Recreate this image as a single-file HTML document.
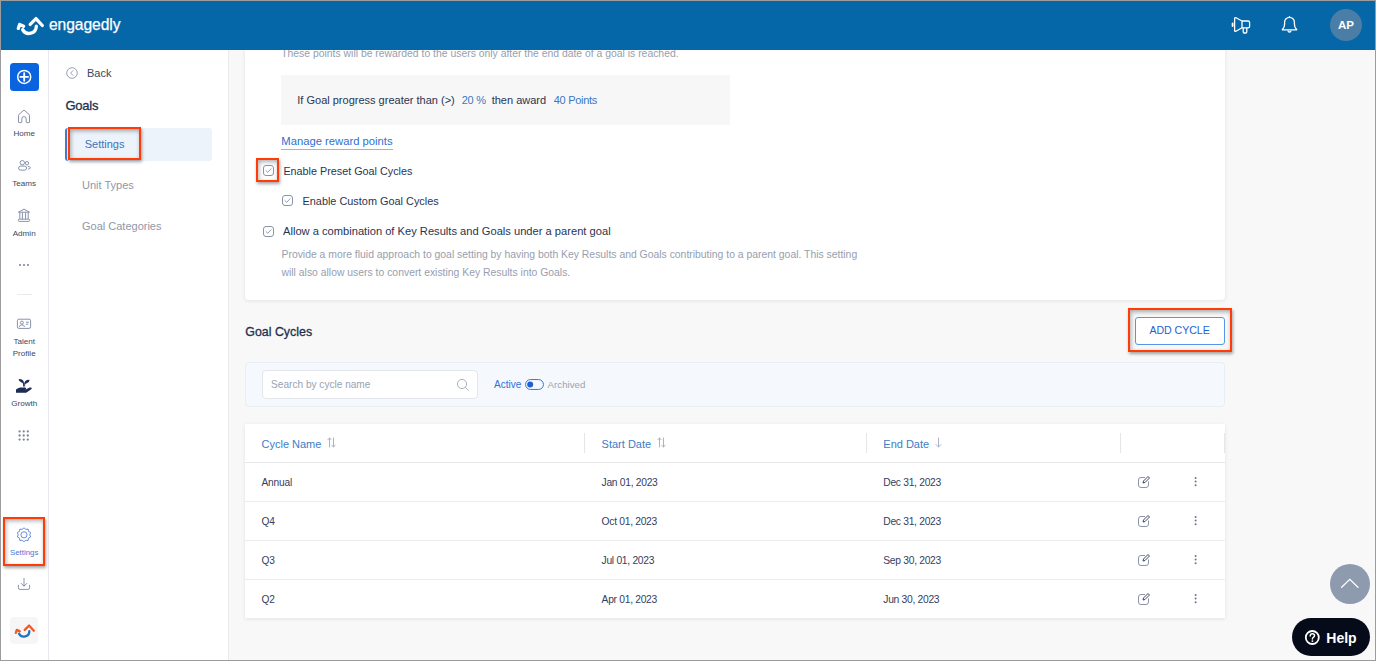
<!DOCTYPE html>
<html><head><meta charset="utf-8"><style>
html,body{margin:0;padding:0;width:1376px;height:661px;overflow:hidden;font-family:"Liberation Sans", sans-serif;}
#root{position:relative;width:1376px;height:661px;overflow:hidden;}
</style></head><body><div id="root">
<div style="position:absolute;left:0px;top:0px;width:1376px;height:661px;background:#f8f8f8"></div>
<div style="position:absolute;left:49px;top:50px;width:180px;height:611px;background:#fff;border-right:1px solid #e9ebef;box-sizing:border-box"></div>
<div style="position:absolute;left:0px;top:50px;width:49px;height:611px;background:#fff;border-right:1px solid #e6e9ef;box-sizing:border-box"></div>
<div style="position:absolute;left:245px;top:-10px;width:980px;height:310px;background:#fff;border-radius:4px;box-shadow:0 1px 4px rgba(0,0,0,0.09)"></div>
<div style="position:absolute;top:49.20px;font-size:10.4px;line-height:10.4px;color:#979eae;font-weight:normal;white-space:nowrap;left:281.2px;">These points will be rewarded to the users only after the end date of a goal is reached.</div>
<div style="position:absolute;left:281px;top:75px;width:449px;height:50px;background:#f7f7f7"></div>
<div style="position:absolute;top:94.69px;font-size:11px;line-height:11px;color:#2a3452;font-weight:normal;white-space:nowrap;left:297.3px;">If Goal progress greater than (&gt;)</div>
<div style="position:absolute;top:94.69px;font-size:11px;line-height:11px;color:#3b78c4;font-weight:normal;white-space:nowrap;letter-spacing:-0.3px;left:461.8px;">20 %</div>
<div style="position:absolute;top:94.69px;font-size:11px;line-height:11px;color:#2a3452;font-weight:normal;white-space:nowrap;left:491.7px;">then award</div>
<div style="position:absolute;top:94.69px;font-size:11px;line-height:11px;color:#3b78c4;font-weight:normal;white-space:nowrap;letter-spacing:-0.3px;left:553.8px;">40 Points</div>
<div style="position:absolute;top:136.28px;font-size:11.25px;line-height:11.25px;color:#2f6fd0;font-weight:normal;white-space:nowrap;left:281.3px;">Manage reward points</div>
<div style="position:absolute;left:281px;top:148.5px;width:112px;height:1.5px;background:#8cb8f0"></div>
<svg style="position:absolute;left:262.5px;top:165px" width="11" height="11" viewBox="0 0 11 11" fill="none"><rect x="0.5" y="0.5" width="10" height="10" rx="2.5" stroke="#8a93a8" stroke-width="1"/><path d="M3 5.6 L4.8 7.3 L8 3.8" stroke="#8a93a8" stroke-width="0.9" stroke-linecap="round" stroke-linejoin="round"/></svg>
<div style="position:absolute;top:165.56px;font-size:10.8px;line-height:10.8px;color:#2a3452;font-weight:normal;white-space:nowrap;left:283.4px;">Enable Preset Goal Cycles</div>
<svg style="position:absolute;left:282px;top:195px" width="11" height="11" viewBox="0 0 11 11" fill="none"><rect x="0.5" y="0.5" width="10" height="10" rx="2.5" stroke="#8a93a8" stroke-width="1"/><path d="M3 5.6 L4.8 7.3 L8 3.8" stroke="#8a93a8" stroke-width="0.9" stroke-linecap="round" stroke-linejoin="round"/></svg>
<div style="position:absolute;top:196.27px;font-size:10.9px;line-height:10.9px;color:#2a3452;font-weight:normal;white-space:nowrap;left:302.5px;">Enable Custom Goal Cycles</div>
<svg style="position:absolute;left:262.5px;top:225.5px" width="11" height="11" viewBox="0 0 11 11" fill="none"><rect x="0.5" y="0.5" width="10" height="10" rx="2.5" stroke="#8a93a8" stroke-width="1"/><path d="M3 5.6 L4.8 7.3 L8 3.8" stroke="#8a93a8" stroke-width="0.9" stroke-linecap="round" stroke-linejoin="round"/></svg>
<div style="position:absolute;top:226.36px;font-size:11.15px;line-height:11.15px;color:#2a3452;font-weight:normal;white-space:nowrap;left:283px;">Allow a combination of Key Results and Goals under a parent goal</div>
<div style="position:absolute;top:250.20px;font-size:10.4px;line-height:10.4px;color:#979eae;font-weight:normal;white-space:nowrap;left:281.5px;">Provide a more fluid approach to goal setting by having both Key Results and Goals contributing to a parent goal. This setting</div>
<div style="position:absolute;top:267.50px;font-size:10.4px;line-height:10.4px;color:#979eae;font-weight:normal;white-space:nowrap;left:281.5px;">will also allow users to convert existing Key Results into Goals.</div>
<div style="position:absolute;left:0px;top:0px;width:1376px;height:50px;background:#0567a8"></div>
<div style="position:absolute;top:325.70px;font-size:12.4px;line-height:12.4px;color:#22304f;font-weight:normal;white-space:nowrap;left:245.3px;-webkit-text-stroke:0.3px #22304f;">Goal Cycles</div>
<div style="position:absolute;left:1135px;top:317px;width:90px;height:28px;background:#fff;border:1px solid #5596e8;border-radius:3px;box-sizing:border-box"></div>
<div style="position:absolute;top:325.03px;font-size:10.6px;line-height:10.6px;color:#1d5fd3;font-weight:normal;white-space:nowrap;letter-spacing:-0.05px;left:1149.5px;">ADD CYCLE</div>
<div style="position:absolute;left:245px;top:362px;width:980px;height:45px;background:#f5f9fd;border:1px solid #e9eef4;border-radius:4px;box-sizing:border-box"></div>
<div style="position:absolute;left:262px;top:370px;width:216px;height:29px;background:#fff;border:1px solid #e3e6ec;border-radius:4px;box-sizing:border-box"></div>
<div style="position:absolute;top:379.95px;font-size:10.1px;line-height:10.1px;color:#9aa2b3;font-weight:normal;white-space:nowrap;left:271.1px;">Search by cycle name</div>
<svg style="position:absolute;left:456px;top:378px" width="14" height="14" viewBox="0 0 14 14" fill="none"><circle cx="6" cy="6" r="4.6" stroke="#aab1bf" stroke-width="1"/><path d="M9.4 9.4 L12.5 12.5" stroke="#aab1bf" stroke-width="1" stroke-linecap="round"/></svg>
<div style="position:absolute;top:380.13px;font-size:10px;line-height:10px;color:#2f6fe0;font-weight:normal;white-space:nowrap;left:494px;">Active</div>
<svg style="position:absolute;left:525px;top:379.3px" width="19" height="11" viewBox="0 0 19 11" fill="none"><rect x="0.55" y="0.55" width="17.9" height="9.9" rx="4.95" stroke="#3575e2" stroke-width="1"/><circle cx="5.2" cy="5.5" r="3.0" fill="#1f5fd6"/></svg>
<div style="position:absolute;top:380.39px;font-size:9.7px;line-height:9.7px;color:#9aa2b3;font-weight:normal;white-space:nowrap;left:547.6px;">Archived</div>
<div style="position:absolute;left:245px;top:424px;width:980px;height:194px;background:#fff;box-shadow:0 1px 4px rgba(0,0,0,0.09)"></div>
<div style="position:absolute;left:245px;top:462px;width:980px;height:1px;background:#e6e8ec"></div>
<div style="position:absolute;left:245px;top:501px;width:980px;height:1px;background:#ececef"></div>
<div style="position:absolute;left:245px;top:540px;width:980px;height:1px;background:#ececef"></div>
<div style="position:absolute;left:245px;top:579px;width:980px;height:1px;background:#ececef"></div>
<div style="position:absolute;left:584px;top:433px;width:1px;height:20px;background:#e4e6ea"></div>
<div style="position:absolute;left:866px;top:433px;width:1px;height:20px;background:#e4e6ea"></div>
<div style="position:absolute;left:1120px;top:433px;width:1px;height:20px;background:#e4e6ea"></div>
<div style="position:absolute;left:1224px;top:433px;width:1px;height:20px;background:#e4e6ea"></div>
<div style="position:absolute;top:438.69px;font-size:11px;line-height:11px;color:#3d7cc6;font-weight:normal;white-space:nowrap;left:261.5px;">Cycle Name</div>
<div style="position:absolute;top:438.69px;font-size:11px;line-height:11px;color:#3d7cc6;font-weight:normal;white-space:nowrap;left:601.6px;">Start Date</div>
<div style="position:absolute;top:438.69px;font-size:11px;line-height:11px;color:#3d7cc6;font-weight:normal;white-space:nowrap;left:883.3px;">End Date</div>
<svg style="position:absolute;left:327px;top:436.5px" width="9" height="11" viewBox="0 0 9 11" fill="none"><path d="M2.5 10 V1 M0.8 2.8 L2.5 1 L4.2 2.8" stroke="#a3acbd" stroke-width="0.9" stroke-linecap="round" stroke-linejoin="round"/><path d="M6.5 1 V10 M4.8 8.2 L6.5 10 L8.2 8.2" stroke="#a3acbd" stroke-width="0.9" stroke-linecap="round" stroke-linejoin="round"/></svg>
<svg style="position:absolute;left:657px;top:436.5px" width="9" height="11" viewBox="0 0 9 11" fill="none"><path d="M2.5 10 V1 M0.8 2.8 L2.5 1 L4.2 2.8" stroke="#a3acbd" stroke-width="0.9" stroke-linecap="round" stroke-linejoin="round"/><path d="M6.5 1 V10 M4.8 8.2 L6.5 10 L8.2 8.2" stroke="#a3acbd" stroke-width="0.9" stroke-linecap="round" stroke-linejoin="round"/></svg>
<svg style="position:absolute;left:934px;top:436.5px" width="9" height="11" viewBox="0 0 9 11" fill="none"><path d="M4.5 1 V10 M2 7.5 L4.5 10 L7 7.5" stroke="#a3acbd" stroke-width="0.9" stroke-linecap="round" stroke-linejoin="round"/></svg>
<div style="position:absolute;top:477.67px;font-size:10.2px;line-height:10.2px;color:#36405e;font-weight:normal;white-space:nowrap;letter-spacing:-0.2px;left:261.5px;">Annual</div>
<div style="position:absolute;top:477.58px;font-size:10.3px;line-height:10.3px;color:#36405e;font-weight:normal;white-space:nowrap;letter-spacing:-0.3px;left:601.6px;">Jan 01, 2023</div>
<div style="position:absolute;top:477.58px;font-size:10.3px;line-height:10.3px;color:#36405e;font-weight:normal;white-space:nowrap;letter-spacing:-0.3px;left:883.3px;">Dec 31, 2023</div>
<svg style="position:absolute;left:1137px;top:475px" width="14" height="14" viewBox="0 0 14 14" fill="none"><path d="M8 2.5 H4 A2.5 2.5 0 0 0 1.5 5 V10 A2.5 2.5 0 0 0 4 12.5 H9 A2.5 2.5 0 0 0 11.5 10 V6.5" stroke="#8a94aa" stroke-width="1"/><path d="M6 8 L6.5 6 L11 1.5 L12.5 3 L8 7.5 Z" stroke="#2a3452" stroke-width="0.9" stroke-linejoin="round"/></svg>
<svg style="position:absolute;left:1193px;top:476px" width="5" height="12" viewBox="0 0 5 12" fill="none"><circle cx="2.6" cy="2.0" r="1.0" fill="#6b7590"/><circle cx="2.6" cy="5.6" r="1.0" fill="#6b7590"/><circle cx="2.6" cy="9.2" r="1.0" fill="#6b7590"/></svg>
<div style="position:absolute;top:516.67px;font-size:10.2px;line-height:10.2px;color:#36405e;font-weight:normal;white-space:nowrap;letter-spacing:-0.2px;left:261.5px;">Q4</div>
<div style="position:absolute;top:516.58px;font-size:10.3px;line-height:10.3px;color:#36405e;font-weight:normal;white-space:nowrap;letter-spacing:-0.3px;left:601.6px;">Oct 01, 2023</div>
<div style="position:absolute;top:516.58px;font-size:10.3px;line-height:10.3px;color:#36405e;font-weight:normal;white-space:nowrap;letter-spacing:-0.3px;left:883.3px;">Dec 31, 2023</div>
<svg style="position:absolute;left:1137px;top:514px" width="14" height="14" viewBox="0 0 14 14" fill="none"><path d="M8 2.5 H4 A2.5 2.5 0 0 0 1.5 5 V10 A2.5 2.5 0 0 0 4 12.5 H9 A2.5 2.5 0 0 0 11.5 10 V6.5" stroke="#8a94aa" stroke-width="1"/><path d="M6 8 L6.5 6 L11 1.5 L12.5 3 L8 7.5 Z" stroke="#2a3452" stroke-width="0.9" stroke-linejoin="round"/></svg>
<svg style="position:absolute;left:1193px;top:515px" width="5" height="12" viewBox="0 0 5 12" fill="none"><circle cx="2.6" cy="2.0" r="1.0" fill="#6b7590"/><circle cx="2.6" cy="5.6" r="1.0" fill="#6b7590"/><circle cx="2.6" cy="9.2" r="1.0" fill="#6b7590"/></svg>
<div style="position:absolute;top:555.67px;font-size:10.2px;line-height:10.2px;color:#36405e;font-weight:normal;white-space:nowrap;letter-spacing:-0.2px;left:261.5px;">Q3</div>
<div style="position:absolute;top:555.58px;font-size:10.3px;line-height:10.3px;color:#36405e;font-weight:normal;white-space:nowrap;letter-spacing:-0.3px;left:601.6px;">Jul 01, 2023</div>
<div style="position:absolute;top:555.58px;font-size:10.3px;line-height:10.3px;color:#36405e;font-weight:normal;white-space:nowrap;letter-spacing:-0.3px;left:883.3px;">Sep 30, 2023</div>
<svg style="position:absolute;left:1137px;top:553px" width="14" height="14" viewBox="0 0 14 14" fill="none"><path d="M8 2.5 H4 A2.5 2.5 0 0 0 1.5 5 V10 A2.5 2.5 0 0 0 4 12.5 H9 A2.5 2.5 0 0 0 11.5 10 V6.5" stroke="#8a94aa" stroke-width="1"/><path d="M6 8 L6.5 6 L11 1.5 L12.5 3 L8 7.5 Z" stroke="#2a3452" stroke-width="0.9" stroke-linejoin="round"/></svg>
<svg style="position:absolute;left:1193px;top:554px" width="5" height="12" viewBox="0 0 5 12" fill="none"><circle cx="2.6" cy="2.0" r="1.0" fill="#6b7590"/><circle cx="2.6" cy="5.6" r="1.0" fill="#6b7590"/><circle cx="2.6" cy="9.2" r="1.0" fill="#6b7590"/></svg>
<div style="position:absolute;top:594.67px;font-size:10.2px;line-height:10.2px;color:#36405e;font-weight:normal;white-space:nowrap;letter-spacing:-0.2px;left:261.5px;">Q2</div>
<div style="position:absolute;top:594.58px;font-size:10.3px;line-height:10.3px;color:#36405e;font-weight:normal;white-space:nowrap;letter-spacing:-0.3px;left:601.6px;">Apr 01, 2023</div>
<div style="position:absolute;top:594.58px;font-size:10.3px;line-height:10.3px;color:#36405e;font-weight:normal;white-space:nowrap;letter-spacing:-0.3px;left:883.3px;">Jun 30, 2023</div>
<svg style="position:absolute;left:1137px;top:592px" width="14" height="14" viewBox="0 0 14 14" fill="none"><path d="M8 2.5 H4 A2.5 2.5 0 0 0 1.5 5 V10 A2.5 2.5 0 0 0 4 12.5 H9 A2.5 2.5 0 0 0 11.5 10 V6.5" stroke="#8a94aa" stroke-width="1"/><path d="M6 8 L6.5 6 L11 1.5 L12.5 3 L8 7.5 Z" stroke="#2a3452" stroke-width="0.9" stroke-linejoin="round"/></svg>
<svg style="position:absolute;left:1193px;top:593px" width="5" height="12" viewBox="0 0 5 12" fill="none"><circle cx="2.6" cy="2.0" r="1.0" fill="#6b7590"/><circle cx="2.6" cy="5.6" r="1.0" fill="#6b7590"/><circle cx="2.6" cy="9.2" r="1.0" fill="#6b7590"/></svg>
<svg style="position:absolute;left:0px;top:0px" width="1376" height="661" viewBox="0 0 1376 661" fill="none"><g transform="translate(14,12) scale(1)" stroke-linecap="round" stroke-linejoin="round" fill="none"><path d="M4.3 16.4 L5.6 12.4 L9.6 14.3" stroke="#fff" stroke-width="3.3"/><path d="M8.6 17.6 A7.3 7.3 0 0 0 22.3 14.2" stroke="#fff" stroke-width="3.3"/><path d="M16.2 12.4 L22 6.6 L28.3 13.5" stroke="#fff" stroke-width="3.3"/></g></svg>
<div style="position:absolute;top:16.99px;font-size:15.6px;line-height:15.6px;color:#fff;font-weight:normal;white-space:nowrap;letter-spacing:-0.05px;left:49px;-webkit-text-stroke:0.25px #fff;">engagedly</div>
<svg style="position:absolute;left:1231px;top:15px" width="20" height="20" viewBox="0 0 20 20" fill="none"><g stroke="#fff" stroke-width="1.3" stroke-linejoin="round" fill="none"><path d="M1.6 8.5 V11" stroke-linecap="round" stroke-width="1.8"/><path d="M3.6 3.6 Q3.6 2.2 5 2.8 L11 6 V12.8 L5 16.2 Q3.6 16.8 3.6 15.4 Z"/><path d="M11 6 H17 Q18.6 6 18.6 7.6 V11.2 Q18.6 12.8 17 12.8 H11"/><path d="M12.2 12.8 V16.8 Q12.2 18 13.2 18 H14.8 Q15.8 18 15.8 16.8 V12.8"/></g></svg>
<svg style="position:absolute;left:1280px;top:14px" width="20" height="20" viewBox="0 0 20 20" fill="none"><g stroke="#fff" stroke-width="1.3" stroke-linejoin="round" fill="none"><path d="M2.6 15.2 Q4.6 13.2 4.6 10 V8.2 A4.9 4.9 0 0 1 14.4 8.2 V10 Q14.4 13.2 16.4 15.2 Q17 15.9 16.2 15.9 H2.8 Q2 15.9 2.6 15.2 Z"/><path d="M8 16.4 A1.5 1.6 0 0 0 11 16.4"/><path d="M9.5 2.6 V3.3" stroke-linecap="round"/></g></svg>
<div style="position:absolute;left:1330px;top:9px;width:32px;height:32px;background:#4b7ea6;border-radius:50%"></div>
<div style="position:absolute;top:20.17px;font-size:11.5px;line-height:11.5px;color:#fff;font-weight:bold;white-space:nowrap;left:1246px;width:200px;text-align:center;">AP</div>
<div style="position:absolute;left:10px;top:63px;width:28.6px;height:28px;background:#0a63df;border-radius:3.5px"></div>
<svg style="position:absolute;left:10px;top:63px" width="29" height="28" viewBox="0 0 29 28" fill="none"><circle cx="14.2" cy="13.9" r="6.5" stroke="#fff" stroke-width="1.5"/><path d="M10.4 13.9 H18 M14.2 10.1 V17.7" stroke="#fff" stroke-width="1.9" stroke-linecap="round"/></svg>
<svg style="position:absolute;left:16px;top:108px" width="16" height="16" viewBox="0 0 16 16" fill="none"><path d="M2.5 14 V7.6 Q2.5 6.9 3 6.4 L8 2 L13 6.4 Q13.5 6.9 13.5 7.6 V14 Q13.5 14.6 12.9 14.6 H10.8 Q10.2 14.6 10.2 14 V10.8 A2.2 2.2 0 0 0 5.8 10.8 V14 Q5.8 14.6 5.2 14.6 H3.1 Q2.5 14.6 2.5 14 Z" stroke="#7c86a0" stroke-width="0.9" stroke-linejoin="round"/></svg>
<div style="position:absolute;top:129.74px;font-size:8.1px;line-height:8.1px;color:#3b4863;font-weight:normal;white-space:nowrap;left:-75.8px;width:200px;text-align:center;">Home</div>
<svg style="position:absolute;left:16px;top:157px" width="16" height="16" viewBox="0 0 16 16" fill="none"><g stroke="#7c86a0" stroke-width="0.9" fill="none"><circle cx="6.3" cy="5.7" r="2.2"/><circle cx="11" cy="6.2" r="1.7"/><rect x="2.6" y="9.1" width="8" height="4" rx="2"/><path d="M11.8 9.4 Q14.4 9.6 14.4 10.8 Q14.4 12 12.2 12"/></g></svg>
<div style="position:absolute;top:180.14px;font-size:8.1px;line-height:8.1px;color:#3b4863;font-weight:normal;white-space:nowrap;left:-75.8px;width:200px;text-align:center;">Teams</div>
<svg style="position:absolute;left:16px;top:207px" width="16" height="16" viewBox="0 0 16 16" fill="none"><g stroke="#7c86a0" stroke-width="0.9" fill="none" stroke-linejoin="round"><path d="M2.4 5.2 L8 2.2 L13.6 5.2 Z"/><path d="M3.8 5.6 V12 M6.4 5.6 V12 M9.6 5.6 V12 M12.2 5.6 V12"/><rect x="2.3" y="12.2" width="11.4" height="2.2" rx="1"/></g></svg>
<div style="position:absolute;top:230.14px;font-size:8.1px;line-height:8.1px;color:#3b4863;font-weight:normal;white-space:nowrap;left:-75.8px;width:200px;text-align:center;">Admin</div>
<svg style="position:absolute;left:16px;top:259px" width="16" height="12" viewBox="0 0 16 12" fill="none"><g fill="#7c86a0"><circle cx="4" cy="6" r="1.05"/><circle cx="8" cy="6" r="1.05"/><circle cx="12" cy="6" r="1.05"/></g></svg>
<div style="position:absolute;left:17px;top:294px;width:15px;height:1px;background:#e8eaee"></div>
<svg style="position:absolute;left:16px;top:316px" width="16" height="14" viewBox="0 0 16 14" fill="none"><g stroke="#7c86a0" stroke-width="0.9" fill="none"><rect x="1.4" y="3.2" width="13.2" height="9.2" rx="1.6"/><circle cx="5.9" cy="6.6" r="1.5"/><path d="M3.3 11 Q3.6 8.8 5.9 8.8 Q8.2 8.8 8.5 11"/><path d="M10 6.2 H12.8 M10 8.2 H12.2"/></g></svg>
<div style="position:absolute;top:337.94px;font-size:8.1px;line-height:8.1px;color:#3b4863;font-weight:normal;white-space:nowrap;left:-75.8px;width:200px;text-align:center;">Talent</div>
<div style="position:absolute;top:350.44px;font-size:8.1px;line-height:8.1px;color:#3b4863;font-weight:normal;white-space:nowrap;left:-75.8px;width:200px;text-align:center;">Profile</div>
<svg style="position:absolute;left:15px;top:377px" width="18" height="18" viewBox="0 0 18 18" fill="none"><g fill="#1d2b55"><path d="M9 9.5 V6 Q9 4 7 2.6 Q4.5 1.6 3.6 2.2 Q4 4.8 6.6 5.6 Q8 6 8.1 7 V9.5 Z"/><path d="M9.2 9.5 V6.2 Q9.6 4 12 3 Q14 2.6 14.6 3 Q14.2 5.6 11.8 6.2 Q10.2 6.6 10.1 7.5 V9.5 Z"/><path d="M1 12.6 Q3 10.6 5.2 10.4 H10 Q11.2 10.4 11.2 11.4 Q11.2 12.4 10 12.4 H7.4 H10.8 L14.6 10.6 Q16.2 10 16.8 11 Q17 11.6 16.2 12.2 L11.6 15.4 Q11 15.8 10.2 15.8 H1 Z"/></g></svg>
<div style="position:absolute;top:400.34px;font-size:8.1px;line-height:8.1px;color:#3b4863;font-weight:normal;white-space:nowrap;left:-75.8px;width:200px;text-align:center;">Growth</div>
<svg style="position:absolute;left:18px;top:429px" width="12" height="13" viewBox="0 0 12 13" fill="none"><circle cx="1.6" cy="2.4" r="1.15" fill="#7c86a0"/><circle cx="1.6" cy="6.5" r="1.15" fill="#7c86a0"/><circle cx="1.6" cy="10.6" r="1.15" fill="#7c86a0"/><circle cx="5.699999999999999" cy="2.4" r="1.15" fill="#7c86a0"/><circle cx="5.699999999999999" cy="6.5" r="1.15" fill="#7c86a0"/><circle cx="5.699999999999999" cy="10.6" r="1.15" fill="#7c86a0"/><circle cx="9.799999999999999" cy="2.4" r="1.15" fill="#7c86a0"/><circle cx="9.799999999999999" cy="6.5" r="1.15" fill="#7c86a0"/><circle cx="9.799999999999999" cy="10.6" r="1.15" fill="#7c86a0"/></svg>
<svg style="position:absolute;left:15px;top:525.7px" width="18" height="18" viewBox="0 0 18 18" fill="none"><g stroke="#5a7fd6" stroke-width="0.9" fill="none" stroke-linejoin="round"><path d="M9 1.8 L10.8 3.4 L13.1 3.1 L13.5 5.4 L15.6 6.6 L14.8 8.8 L15.6 11 L13.5 12.2 L13.1 14.5 L10.8 14.2 L9 15.8 L7.2 14.2 L4.9 14.5 L4.5 12.2 L2.4 11 L3.2 8.8 L2.4 6.6 L4.5 5.4 L4.9 3.1 L7.2 3.4 Z"/><circle cx="9" cy="8.8" r="3.1"/></g></svg>
<div style="position:absolute;top:548.91px;font-size:7.9px;line-height:7.9px;color:#4d78d8;font-weight:normal;white-space:nowrap;left:-75.8px;width:200px;text-align:center;">Settings</div>
<svg style="position:absolute;left:16px;top:577px" width="16" height="14" viewBox="0 0 16 14" fill="none"><g stroke="#7c86a0" stroke-width="0.9" fill="none" stroke-linecap="round" stroke-linejoin="round"><path d="M8 1.5 V9 M5.2 6.4 L8 9.2 L10.8 6.4"/><path d="M2.4 8.2 V10.8 Q2.4 12.4 4 12.4 H12 Q13.6 12.4 13.6 10.8 V8.2"/></g></svg>
<div style="position:absolute;left:10.3px;top:616.6px;width:27.7px;height:27.399999999999977px;background:#f6f6f7;border-radius:4px"></div>
<svg style="position:absolute;left:0px;top:0px" width="1376" height="661" viewBox="0 0 1376 661" fill="none"><g transform="translate(12.6,620.6) scale(0.75)" stroke-linecap="round" stroke-linejoin="round" fill="none"><path d="M4.3 16.4 L5.6 12.4 L9.6 14.3" stroke="#f15a24" stroke-width="3.1"/><path d="M8.6 17.6 A7.3 7.3 0 0 0 22.3 14.2" stroke="#1f73c0" stroke-width="3.1"/><path d="M16.2 12.4 L22 6.6 L28.3 13.5" stroke="#f15a24" stroke-width="3.1"/></g></svg>
<svg style="position:absolute;left:65px;top:66px" width="14" height="14" viewBox="0 0 14 14" fill="none"><circle cx="7" cy="7" r="5.3" stroke="#8d95a8" stroke-width="0.9"/><path d="M8 4.6 L5.6 7 L8 9.4" stroke="#8d95a8" stroke-width="0.9" stroke-linecap="round" stroke-linejoin="round"/></svg>
<div style="position:absolute;top:68.29px;font-size:11px;line-height:11px;color:#3b4560;font-weight:normal;white-space:nowrap;left:87px;">Back</div>
<div style="position:absolute;top:98.70px;font-size:13px;line-height:13px;color:#22304f;font-weight:normal;white-space:nowrap;letter-spacing:-0.2px;left:65.4px;-webkit-text-stroke:0.3px #22304f;">Goals</div>
<div style="position:absolute;left:65px;top:128px;width:147px;height:33px;background:#edf3fb;border-radius:3px;border-left:2px solid #3f7fcf;box-sizing:border-box"></div>
<div style="position:absolute;top:139.29px;font-size:11px;line-height:11px;color:#3f72b8;font-weight:normal;white-space:nowrap;left:84.7px;">Settings</div>
<div style="position:absolute;top:179.69px;font-size:11px;line-height:11px;color:#8f97a8;font-weight:normal;white-space:nowrap;left:82px;">Unit Types</div>
<div style="position:absolute;top:221.09px;font-size:11px;line-height:11px;color:#8f97a8;font-weight:normal;white-space:nowrap;left:82px;">Goal Categories</div>
<div style="position:absolute;left:68px;top:127px;width:73px;height:32.5px;border:2px solid #ff3b08;box-sizing:border-box;box-shadow:1px 2px 3px rgba(0,0,0,0.35), inset 1px 2px 4px rgba(0,0,0,0.32)"></div>
<div style="position:absolute;left:256px;top:158px;width:23px;height:24px;border:2px solid #ff3b08;box-sizing:border-box;box-shadow:1px 2px 3px rgba(0,0,0,0.35), inset 1px 2px 4px rgba(0,0,0,0.32)"></div>
<div style="position:absolute;left:1128px;top:308px;width:104px;height:44px;border:2px solid #ff3b08;box-sizing:border-box;box-shadow:1px 2px 3px rgba(0,0,0,0.35), inset 1px 2px 4px rgba(0,0,0,0.32)"></div>
<div style="position:absolute;left:3px;top:517px;width:42px;height:48.5px;border:2px solid #ff3b08;box-sizing:border-box;box-shadow:1px 2px 3px rgba(0,0,0,0.35), inset 1px 2px 4px rgba(0,0,0,0.32)"></div>
<div style="position:absolute;left:1329.75px;top:564px;width:40.0px;height:40px;background:#8e9aae;border-radius:50%"></div>
<svg style="position:absolute;left:1338px;top:575px" width="24" height="16" viewBox="0 0 24 16" fill="none"><path d="M3.6 12.2 L11.8 4.4 L20 12.2" stroke="#fff" stroke-width="1.3" fill="none" stroke-linecap="round"/></svg>
<div style="position:absolute;left:1292px;top:618px;width:78px;height:38px;background:#050b19;border-radius:19px"></div>
<svg style="position:absolute;left:1304px;top:629px" width="17" height="17" viewBox="0 0 17 17" fill="none"><circle cx="8.3" cy="8.5" r="6.5" stroke="#fff" stroke-width="1.8" fill="none"/><path d="M6.2 6.9 Q6.2 4.7 8.4 4.7 Q10.5 4.7 10.5 6.6 Q10.5 7.8 9.3 8.4 Q8.4 8.9 8.4 9.9" stroke="#fff" stroke-width="1.5" fill="none" stroke-linecap="round"/><circle cx="8.4" cy="12.1" r="0.95" fill="#fff"/></svg>
<div style="position:absolute;top:631.05px;font-size:14px;line-height:14px;color:#fff;font-weight:bold;white-space:nowrap;left:1326.3px;">Help</div>
<div style="position:absolute;left:0px;top:0px;width:1376px;height:661px;border:1px solid #9c9c9c;box-sizing:border-box"></div>
</div></body></html>
